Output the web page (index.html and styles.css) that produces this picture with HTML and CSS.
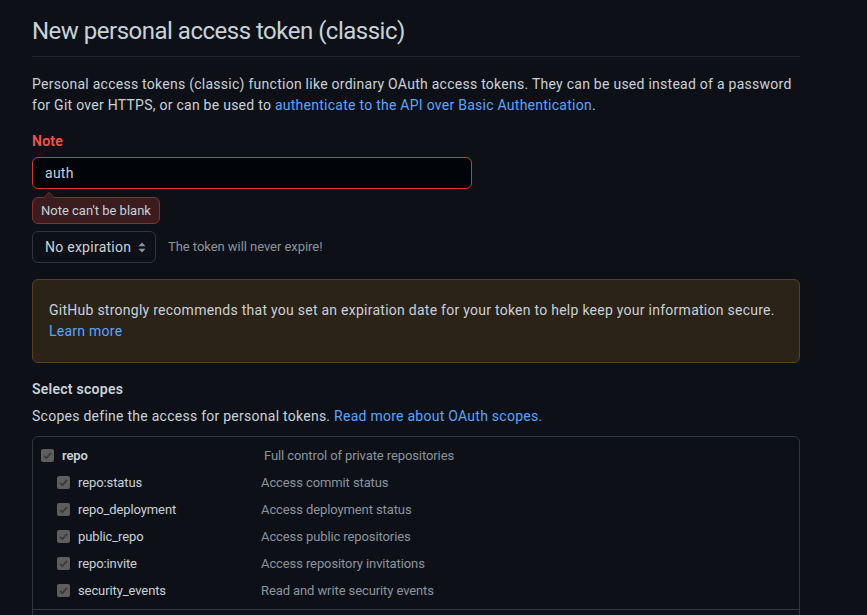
FILE: index.html
```html
<!DOCTYPE html>
<html lang="en">
<head>
<meta charset="utf-8">
<title>New personal access token (classic)</title>
<link rel="stylesheet" href="styles.css">
</head>
<body>
<main class="page">
  <div class="subhead">
    <h1 class="subhead-title">New personal access token (classic)</h1>
  </div>
  <p class="intro">Personal access tokens (classic) function like ordinary OAuth access tokens. They can be used instead of a password for Git over HTTPS, or can be used to <a href="#" class="link">authenticate to the API over Basic Authentication</a>.</p>

  <div class="form-group errored">
    <label class="label-error" for="note">Note</label>
    <input id="note" class="note-input" type="text" value="auth">
    <div class="error-tip">Note can't be blank</div>
  </div>

  <div class="expiry-row">
    <div class="select-btn">
      <span>No expiration</span>
      <svg class="updown" width="8" height="11" viewBox="0 0 8 11"><path d="M4 0.5 L7.5 4.2 H0.5 Z M4 10.5 L0.5 6.8 H7.5 Z" fill="#8b949e"/></svg>
    </div>
    <span class="expiry-note">The token will never expire!</span>
  </div>

  <div class="flash-warn">
    GitHub strongly recommends that you set an expiration date for your token to help keep your information secure.<br>
    <a href="#" class="link">Learn more</a>
  </div>

  <h2 class="scopes-title">Select scopes</h2>
  <p class="scopes-desc">Scopes define the access for personal tokens. <a href="#" class="link">Read more about OAuth scopes.</a></p>

  <div class="scope-table">
    <div class="scope-group">
      <div class="scope-row top">
        <label class="scope-label"><span class="cb"><svg viewBox="0 0 13 13" width="13" height="13"><path d="M3 6.8 L5.4 9.2 L10 3.8" stroke="#3b3b3b" stroke-width="1.8" fill="none"/></svg></span><span class="name strong">repo</span></label>
        <span class="scope-desc">Full control of private repositories</span>
      </div>
      <div class="scope-row sub">
        <label class="scope-label"><span class="cb"><svg viewBox="0 0 13 13" width="13" height="13"><path d="M3 6.8 L5.4 9.2 L10 3.8" stroke="#3b3b3b" stroke-width="1.8" fill="none"/></svg></span><span class="name">repo:status</span></label>
        <span class="scope-desc">Access commit status</span>
      </div>
      <div class="scope-row sub">
        <label class="scope-label"><span class="cb"><svg viewBox="0 0 13 13" width="13" height="13"><path d="M3 6.8 L5.4 9.2 L10 3.8" stroke="#3b3b3b" stroke-width="1.8" fill="none"/></svg></span><span class="name">repo_deployment</span></label>
        <span class="scope-desc">Access deployment status</span>
      </div>
      <div class="scope-row sub">
        <label class="scope-label"><span class="cb"><svg viewBox="0 0 13 13" width="13" height="13"><path d="M3 6.8 L5.4 9.2 L10 3.8" stroke="#3b3b3b" stroke-width="1.8" fill="none"/></svg></span><span class="name">public_repo</span></label>
        <span class="scope-desc">Access public repositories</span>
      </div>
      <div class="scope-row sub">
        <label class="scope-label"><span class="cb"><svg viewBox="0 0 13 13" width="13" height="13"><path d="M3 6.8 L5.4 9.2 L10 3.8" stroke="#3b3b3b" stroke-width="1.8" fill="none"/></svg></span><span class="name">repo:invite</span></label>
        <span class="scope-desc">Access repository invitations</span>
      </div>
      <div class="scope-row sub">
        <label class="scope-label"><span class="cb"><svg viewBox="0 0 13 13" width="13" height="13"><path d="M3 6.8 L5.4 9.2 L10 3.8" stroke="#3b3b3b" stroke-width="1.8" fill="none"/></svg></span><span class="name">security_events</span></label>
        <span class="scope-desc">Read and write security events</span>
      </div>
    </div>
    <div class="scope-group">
      <div class="scope-row top">
        <label class="scope-label"><span class="cb"><svg viewBox="0 0 13 13" width="13" height="13"><path d="M3 6.8 L5.4 9.2 L10 3.8" stroke="#3b3b3b" stroke-width="1.8" fill="none"/></svg></span><span class="name strong">workflow</span></label>
        <span class="scope-desc">Update GitHub Action workflows</span>
      </div>
    </div>
  </div>
</main>
</body>
</html>
```

FILE: styles.css
```css
* { box-sizing: border-box; }

html, body {
  margin: 0;
  padding: 0;
  background: #0d1117;
  color: #c9d1d9;
  font-family: Roboto, "Liberation Sans", sans-serif;
  font-size: 14px;
  line-height: 1.5;
  letter-spacing: 0.26px;
  overflow: hidden;
}

.page {
  width: 800px;
  padding: 0 0 0 32px;
}

.link {
  color: #58a6ff;
  text-decoration: none;
}

.subhead {
  padding-top: 13px;
  padding-bottom: 7px;
  border-bottom: 1px solid #21262d;
}

.subhead-title {
  margin: 0;
  font-size: 24px;
  font-weight: 400;
  line-height: 36px;
  letter-spacing: -0.5px;
  color: #c9d1d9;
}

.intro {
  margin: 17px 0 15px;
  line-height: 21px;
}

.form-group {
  display: flex;
  flex-direction: column;
  align-items: flex-start;
}

.label-error {
  color: #f85149;
  font-weight: 600;
  line-height: 20px;
  margin-bottom: 6px;
}

.note-input {
  width: 440px;
  height: 32px;
  padding: 5px 12px;
  font: inherit;
  font-size: 14px;
  letter-spacing: 0.26px;
  color: #c9d1d9;
  background: #010409;
  border: 1px solid #da3633;
  border-radius: 6px;
  outline: none;
}

.error-tip {
  position: relative;
  margin-top: 8px;
  padding: 4px 8px;
  font-size: 13px;
  letter-spacing: 0;
  line-height: 17px;
  color: #c9d1d9;
  background: #3b1d20;
  border: 1px solid #8e2b2b;
  border-radius: 6px;
}

.error-tip::before {
  content: "";
  position: absolute;
  top: -6px;
  left: 10px;
  border-left: 6px solid transparent;
  border-right: 6px solid transparent;
  border-bottom: 6px solid #8e2b2b;
}

.error-tip::after {
  content: "";
  position: absolute;
  top: -5px;
  left: 11px;
  border-left: 5px solid transparent;
  border-right: 5px solid transparent;
  border-bottom: 5px solid #3b1d20;
}

.expiry-row {
  display: flex;
  align-items: center;
  gap: 12px;
  margin-top: 7px;
}

.select-btn {
  display: flex;
  align-items: center;
  justify-content: space-between;
  width: 124px;
  height: 32px;
  padding: 0 9px 0 12px;
  border: 1px solid #30363d;
  border-radius: 6px;
  background: #0d1117;
  color: #c9d1d9;
}

.updown { display: block; }

.expiry-note {
  font-size: 13px;
  letter-spacing: -0.05px;
  color: #8b949e;
}

.flash-warn {
  width: 768px;
  margin-top: 16px;
  padding: 20px 16px;
  line-height: 21px;
  background: #2b2218;
  border: 1px solid #5b4215;
  border-radius: 6px;
  color: #c9d1d9;
}

.scopes-title {
  margin: 16px 0 0;
  font-size: 14px;
  font-weight: 600;
  line-height: 21px;
}

.scopes-desc {
  margin: 6px 0 9px;
  line-height: 21px;
}

.scope-table {
  width: 768px;
  border: 1px solid #30363d;
  border-radius: 6px;
}

.scope-group {
  padding: 5px 0;
}

.scope-group + .scope-group {
  border-top: 1px solid #30363d;
}

.scope-row {
  display: flex;
  align-items: center;
  height: 27px;
  font-size: 13px;
  letter-spacing: -0.1px;
}

.scope-row.top { padding-left: 8px; }
.scope-row.sub { padding-left: 24px; }

.scope-label {
  display: flex;
  align-items: center;
  gap: 8px;
}

.scope-row.top .scope-label { width: 223px; }
.scope-row.sub .scope-label { width: 204px; }

.cb {
  display: block;
  width: 13px;
  height: 13px;
  border-radius: 2px;
  background: #5e5e5e;
}

.cb svg { display: block; }

.name { color: #c9d1d9; }
.name.strong { font-weight: 600; }

.scope-desc {
  color: #8b949e;
}
```
